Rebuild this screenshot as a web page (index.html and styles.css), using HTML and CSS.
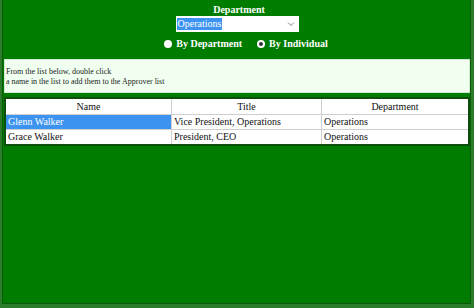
FILE: index.html
```html
<!DOCTYPE html>
<html lang="en">
<head>
  <meta charset="UTF-8" />
  <title>Approver Selection</title>
  <link rel="stylesheet" href="styles.css">
</head>
<body>
  <div class="frame">
    <div class="filter">
      <div class="filter-title">Department</div>
      <div class="dept-select">
        <span class="dept-value">Operations</span>
        <svg class="chevron" width="8" height="6" viewBox="0 0 8 6"><path d="M1 1.5 L4 4.5 L7 1.5" fill="none" stroke="#888" stroke-width="1"/></svg>
      </div>
      <div class="modes">
        <label class="mode"><span class="radio"></span>By Department</label>
        <label class="mode"><span class="radio checked"></span>By Individual</label>
      </div>
    </div>

    <div class="hint">
      From the list below, double click<br>
      a name in the list to add them to the Approver list
    </div>

    <table class="people">
      <thead>
        <tr><th class="col-name">Name</th><th class="col-title">Title</th><th>Department</th></tr>
      </thead>
      <tbody>
        <tr><td class="selected">Glenn Walker</td><td>Vice President, Operations</td><td>Operations</td></tr>
        <tr><td>Grace Walker</td><td>President, CEO</td><td>Operations</td></tr>
      </tbody>
    </table>
  </div>
</body>
</html>
```

FILE: styles.css
```css
html, body {
  margin: 0;
  padding: 0;
  height: 100%;
}
body {
  background: #2b7d2b;
  font-family: "Liberation Serif", "Times New Roman", serif;
}
.frame {
  box-sizing: border-box;
  height: 304px;
  margin: 0 3px 0 2px;
  background: #007c00;
  border: 1px solid #0b5a0b;
  border-top: none;
  padding: 0 0 0 1px;
}
.filter {
  display: flex;
  flex-direction: column;
  align-items: center;
  padding-top: 3px;
}
.filter-title {
  color: #fff;
  font-weight: bold;
  font-size: 10px;
  line-height: 13px;
  margin-left: 4px;
}
.dept-select {
  box-sizing: border-box;
  width: 123px;
  height: 16px;
  background: #fff;
  display: flex;
  align-items: center;
  justify-content: space-between;
  padding: 0 4px 0 1px;
}
.dept-value {
  background: #3d94f0;
  color: #fff;
  font-size: 10px;
  line-height: 12px;
  padding: 0 1px;
}
.modes {
  display: flex;
  gap: 15px;
  margin-top: 5px;
  margin-left: 18px;
}
.mode {
  display: flex;
  align-items: center;
  gap: 4px;
  color: #fff;
  font-weight: bold;
  font-size: 10px;
  line-height: 13px;
}
.radio {
  box-sizing: border-box;
  width: 8px;
  height: 8px;
  border-radius: 50%;
  background: #fff;
  position: relative;
}
.radio.checked::after {
  content: "";
  position: absolute;
  left: 2px;
  top: 2px;
  width: 4px;
  height: 4px;
  border-radius: 50%;
  background: #333;
}
.hint {
  margin-top: 9px;
  width: 466px;
  box-sizing: border-box;
  height: 34px;
  background: #f0fff0;
  border: 1px solid #cfe8cf;
  font-size: 8px;
  line-height: 10px;
  color: #222;
  padding: 7px 1px 0;
}
.people {
  margin-top: 4px;
  width: 466px;
  border-collapse: separate;
  border-spacing: 0;
  border: 2px solid #0e4e0e;
  background: #fff;
  font-size: 10px;
  color: #111;
}
.people th, .people td {
  border-right: 1px solid #cfcfcf;
  border-bottom: 1px solid #cfcfcf;
  padding: 0 2px;
  height: 14px;
  line-height: 12px;
  text-align: left;
  font-weight: normal;
}
.people th:last-child, .people td:last-child {
  border-right: none;
}
.people tbody tr:last-child td {
  border-bottom: none;
}
.people th {
  text-align: center;
  height: 15px;
}
.col-name { width: 161px; }
.col-title { width: 145px; }
.people td.selected {
  background: #3d94f0;
  color: #fff;
}
```
